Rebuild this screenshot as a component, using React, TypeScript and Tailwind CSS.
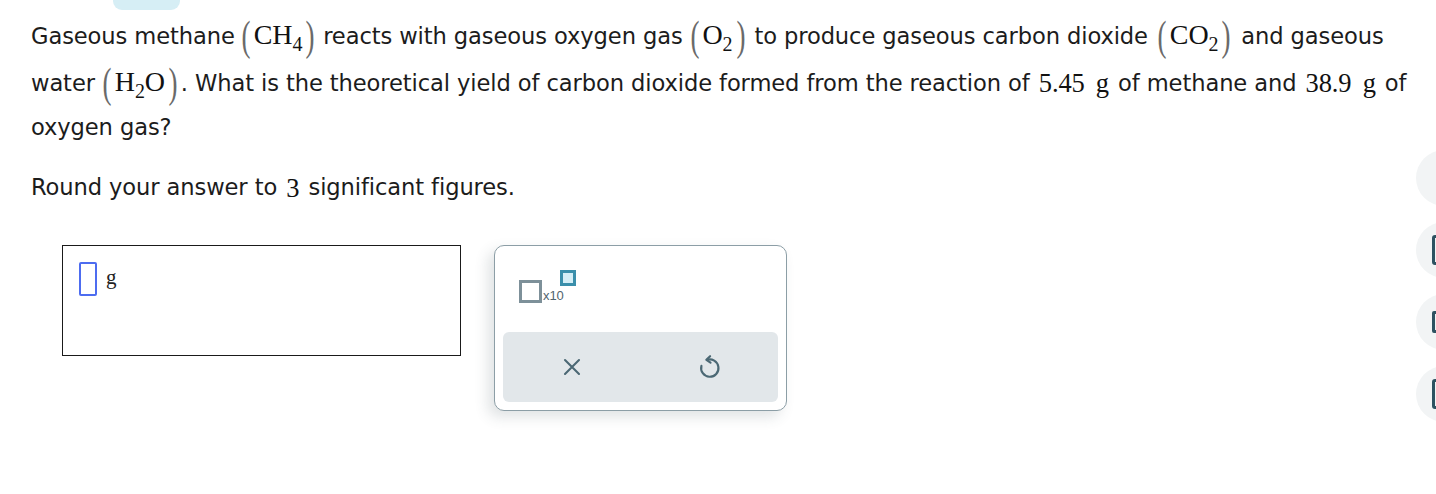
import React from "react";

function Paren({ children }: { children: React.ReactNode }) {
  return (
    <span className="inline-flex items-center align-middle mx-[3px]">
      <span className="font-['Liberation_Serif',serif] text-[30px] leading-none text-[#6a6a6a] scale-y-[1.42] scale-x-[0.9] -translate-y-[1px]">(</span>
      <span className="px-[3px]">{children}</span>
      <span className="font-['Liberation_Serif',serif] text-[30px] leading-none text-[#6a6a6a] scale-y-[1.42] scale-x-[0.9] -translate-y-[1px]">)</span>
    </span>
  );
}

function Formula({ a, sub, b }: { a: string; sub: string; b?: string }) {
  return (
    <span className="font-['Liberation_Serif',serif] text-[28px] leading-none text-[#111]">
      {a}
      <span className="relative top-[7px] text-[20px]">{sub}</span>
      {b}
    </span>
  );
}

function Num({ children }: { children: React.ReactNode }) {
  return <span className="mx-[2px] font-['Liberation_Serif',serif] text-[26.5px] leading-none text-[#111]">{children}</span>;
}

function UndoIcon() {
  return (
    <svg width="24" height="26" viewBox="0 0 22 24" fill="none" stroke="#4b6874" strokeWidth="2" strokeLinecap="round" strokeLinejoin="round">
      <path d="M9 5.5 A8 8 0 1 1 4 11" />
      <path d="M12 2 L8.6 5.4 L12.4 8" />
    </svg>
  );
}

function SideButton({ children }: { children: React.ReactNode }) {
  return (
    <div className="w-[56px] h-[56px] rounded-full bg-[#f2f4f5] flex items-center pl-[16px]">
      {children}
    </div>
  );
}

export default function App() {
  return (
    <div className="relative w-full h-[494px] overflow-hidden bg-white font-['DejaVu_Sans',Verdana,sans-serif] text-[#1c1c1c]">
      {/* top tab */}
      <div className="ml-[113px] w-[67px] h-[10px] rounded-b-[9px] bg-[#d6eef5]" />

      {/* question text */}
      <div className="pl-[31px] pt-[3px] text-[22.6px] tracking-[-0.1px]">
        <div className="h-[47px] flex items-center whitespace-nowrap">
          <span>Gaseous methane</span>
          <span className="ml-[3px]"><Paren><Formula a="CH" sub="4" /></Paren></span>
          <span className="ml-[5px]">reacts with gaseous oxygen gas</span>
          <span className="ml-[4px]"><Paren><Formula a="O" sub="2" /></Paren></span>
          <span className="ml-[6px]">to produce gaseous carbon dioxide</span>
          <span className="ml-[6px]"><Paren><Formula a="CO" sub="2" /></Paren></span>
          <span className="ml-[7px]">and gaseous</span>
        </div>
        <div className="h-[47px] flex items-center whitespace-nowrap">
          <span>water</span>
          <span className="ml-[4px]"><Paren><Formula a="H" sub="2" b="O" /></Paren></span>
          <span>. What is the theoretical yield of carbon dioxide formed from the reaction of&nbsp;</span>
          <Num>5.45</Num>
          <span>&nbsp;</span>
          <Num>g</Num>
          <span>&nbsp;of methane and&nbsp;</span>
          <Num>38.9</Num>
          <span>&nbsp;</span>
          <Num>g</Num>
          <span>&nbsp;of</span>
        </div>
        <div className="h-[41px] flex items-center whitespace-nowrap">oxygen gas?</div>

        <div className="mt-[25px] h-[30px] flex items-center whitespace-nowrap">
          <span>Round your answer to&nbsp;</span>
          <Num>3</Num>
          <span>&nbsp;significant figures.</span>
        </div>

        {/* answer area */}
        <div className="mt-[42px] flex items-start gap-[33px] pl-[31px]">
          <div className="w-[399px] h-[111px] border border-[#1a1a1a] pt-[16px] pl-[16px] flex items-start">
            <div className="w-[18px] h-[34px] border-[2px] border-[#4d6cf0] rounded-[2px]" />
            <span className="ml-[9px] mt-[5px] font-['Liberation_Serif',serif] text-[21px] leading-none text-[#222]">g</span>
          </div>

          <div className="w-[293px] h-[166px] rounded-[10px] border border-[#8c9ea6] bg-white shadow-[-6px_6px_14px_rgba(60,80,90,0.16)] flex flex-col p-[8px]">
            <div className="h-[78px] pl-[16px] pt-[17px]">
              <div className="flex items-end">
                <div className="mt-[9px] w-[23px] h-[23px] border-[3px] border-[#7d9099] bg-white" />
                <span className="text-[13px] leading-none text-[#51656f] font-['Liberation_Sans',sans-serif] mb-[1px] ml-[1px]">x10</span>
                <div className="self-start -ml-[4px] -mt-[1px] w-[16px] h-[16px] border-[3px] border-[#3a8fab] bg-[#d4eef6]" />
              </div>
            </div>
            <div className="flex-1 rounded-[6px] bg-[#e2e7ea] grid grid-cols-2">
              <div className="flex items-center justify-center">
                <svg width="18" height="18" viewBox="0 0 18 18" stroke="#4b6874" strokeWidth="2.1" strokeLinecap="round">
                  <path d="M2 2 L16 16 M16 2 L2 16" />
                </svg>
              </div>
              <div className="flex items-center justify-center">
                <UndoIcon />
              </div>
            </div>
          </div>
        </div>
      </div>

      {/* side toolbar */}
      <div className="absolute right-[-36px] top-[150px] flex flex-col gap-[16px]">
        <SideButton>
          <span />
        </SideButton>
        <SideButton>
          <div className="w-[14px] h-[30px] border-[3px] border-[#2e5261] rounded-[3px]" />
        </SideButton>
        <SideButton>
          <div className="w-[14px] h-[22px] border-[3px] border-[#2e5261] rounded-[2px]" />
        </SideButton>
        <SideButton>
          <div className="w-[14px] h-[30px] border-[3px] border-[#2e5261] rounded-[3px]" />
        </SideButton>
      </div>
    </div>
  );
}
